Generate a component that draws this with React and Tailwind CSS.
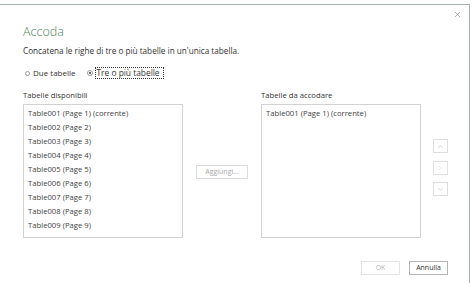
import { X, ChevronUp, ChevronDown } from 'lucide-react';

const available = [
  'Table001 (Page 1) (corrente)',
  'Table002 (Page 2)',
  'Table003 (Page 3)',
  'Table004 (Page 4)',
  'Table005 (Page 5)',
  'Table006 (Page 6)',
  'Table007 (Page 7)',
  'Table008 (Page 8)',
  'Table009 (Page 9)',
];

export default function App() {
  return (
    <div className="w-[474px] h-[283px] bg-white overflow-hidden text-[#444] font-['Open_Sans',sans-serif]">
      <div className="mt-[4px] w-[470px] h-[279px] border-t border-r border-[#a3b4aa] flex flex-col">
        {/* Close */}
        <div className="flex justify-end pr-[7px] pt-[5px] h-[14px]">
          <X className="w-[9px] h-[9px] text-[#666]" strokeWidth={1.4} />
        </div>

        <div className="pl-[23px] flex flex-col">
          <h1 className="mt-[5px] text-[12.5px] leading-[16px] font-light text-[#4f8462]">Accoda</h1>
          <p className="mt-[5px] text-[8.2px] leading-[12px] text-[#333]">
            Concatena le righe di tre o più tabelle in un'unica tabella.
          </p>

          {/* Radios */}
          <div className="mt-[10px] h-[12px] flex items-center text-[8px] text-[#333]">
            <span className="ml-[2px] w-[5px] h-[5px] rounded-full border border-[#999]"></span>
            <span className="ml-[3px]">Due tabelle</span>
            <span className="ml-[11px] w-[6px] h-[6px] rounded-full border border-[#999] flex items-center justify-center">
              <span className="w-[2px] h-[2px] rounded-full bg-[#333]"></span>
            </span>
            <span className="ml-[2px] w-[69px] h-[12px] border border-dotted border-[#333] pl-[1px] text-[8.4px] leading-[10px] whitespace-nowrap">
              Tre o più tabelle
            </span>
          </div>

          {/* Lists */}
          <div className="mt-[11px] flex">
            <div className="flex flex-col w-[160px]">
              <span className="text-[7.7px] leading-[10px] text-[#333]">Tabelle disponibili</span>
              <div className="mt-[4px] h-[134px] border border-[#d2d2d2] pt-[1px] pl-[4px] text-[7.7px] leading-[14px] text-[#444]">
                {available.map((t) => (
                  <div key={t}>{t}</div>
                ))}
              </div>
            </div>

            <div className="w-[78px] pl-[13px] pt-[66px]">
              <button className="w-[52px] h-[14px] border border-[#dcdcdc] text-[7px] leading-[12px] text-[#a8a8a8]">
                Aggiungi...
              </button>
            </div>

            <div className="flex flex-col w-[160px]">
              <span className="text-[7.7px] leading-[10px] text-[#333]">Tabelle da accodare</span>
              <div className="mt-[4px] h-[134px] border border-[#d2d2d2] pt-[1px] pl-[4px] text-[7.7px] leading-[14px] text-[#444]">
                <div>Table001 (Page 1) (corrente)</div>
              </div>
            </div>

            <div className="ml-[12px] pt-[49px] flex flex-col gap-[7.5px]">
              <button className="w-[15px] h-[14px] border border-[#dedede] flex items-center justify-center">
                <ChevronUp className="w-[7px] h-[7px] text-[#999]" strokeWidth={1.5} />
              </button>
              <button className="w-[15px] h-[14px] border border-[#e2e2e2] flex items-center justify-center">
                <X className="w-[6px] h-[6px] text-[#c8c8c8]" strokeWidth={1.5} />
              </button>
              <button className="w-[15px] h-[14px] border border-[#dedede] flex items-center justify-center">
                <ChevronDown className="w-[7px] h-[7px] text-[#999]" strokeWidth={1.5} />
              </button>
            </div>
          </div>

          {/* Footer */}
          <div className="mt-[23px] flex justify-end gap-[9px] pr-[21px]">
            <button className="w-[39px] h-[14px] border border-[#e3e3e3] text-[7px] leading-[12px] text-[#b5b5b5]">OK</button>
            <button className="w-[39px] h-[14px] border border-[#b4b4b4] text-[7px] leading-[12px] text-[#333]">Annulla</button>
          </div>
        </div>
      </div>
    </div>
  );
}
